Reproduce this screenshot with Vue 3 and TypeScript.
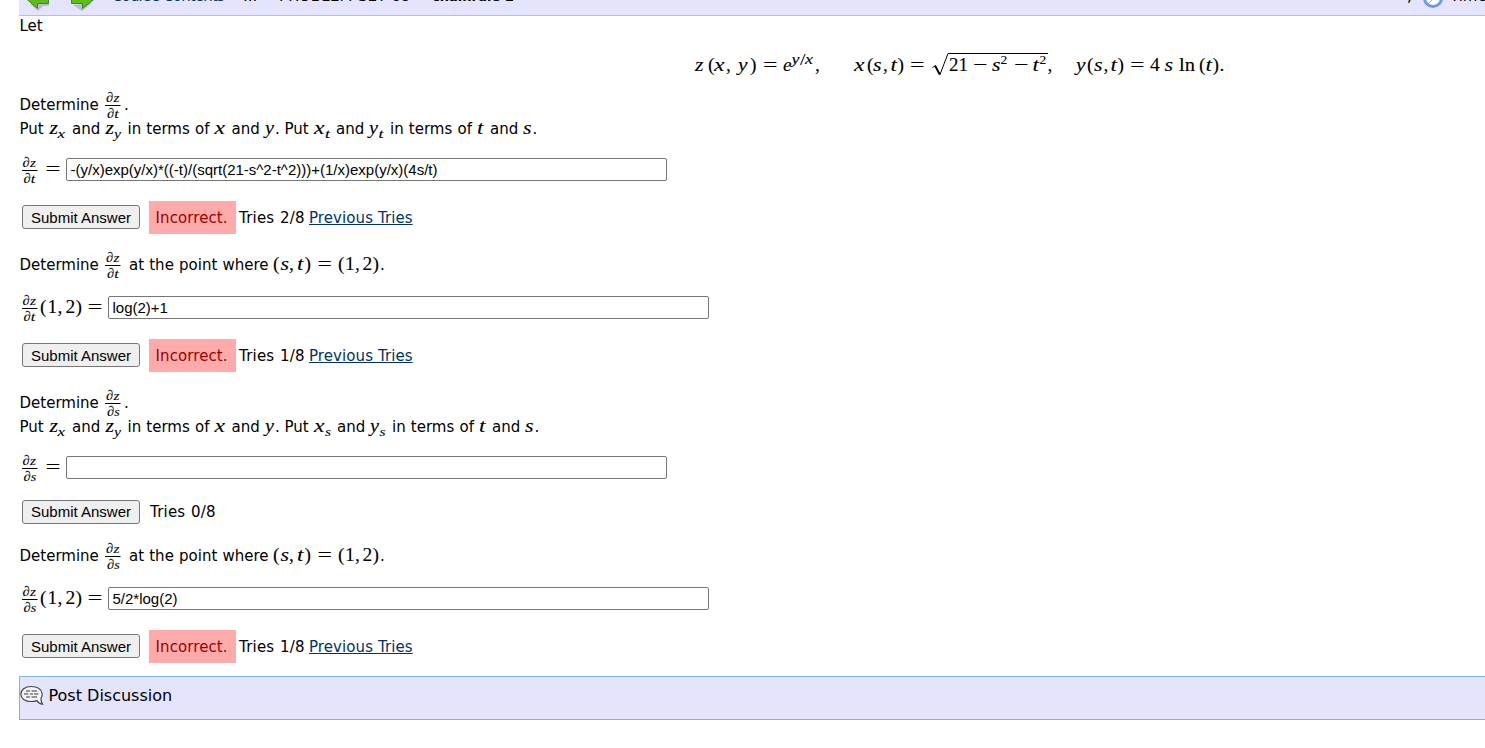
<script setup lang="ts">
type Glyph = { t: string; x: number; w?: number; size?: number; dy?: number; up?: boolean }
type Run = { w: number; text?: string; x?: number; glyphs?: Glyph[]; bar?: number; root?: boolean }
type Part = { lines: Run[][]; lhs: Run; width: number; value: string; tries: string; wrong: boolean }

const it = (t: string, x: number, w: number): Glyph => ({ t, x, w })
const up = (t: string, x: number, w?: number): Glyph => ({ t, x, w, up: true })
const sub = (t: string, x: number, w: number): Glyph => ({ t, x, w, size: 13.5, dy: 4 })
const frac = (v: string, x: number): Glyph[] => [
  { t: '∂', x: x + 1, w: 7, size: 14, dy: -8.2 },
  { t: 'z', x: x + 8.5, w: 6, size: 13.5, dy: -8.2 },
  { t: '∂', x: x + 2, w: 7, size: 14, dy: 7.5 },
  { t: v, x: x + 9.3, w: v === 't' ? 4.5 : 5.5, size: 13.5, dy: 7.5 },
]

const formula: Run = {
  x: 690, w: 540, root: true,
  glyphs: [
    it('z', 695, 8.5), up('(', 708), it('x', 714, 10.5), up(',', 726), it('y', 738, 9.5), up(')', 750), up('=', 763, 14.5),
    it('e', 783, 8.5), { t: 'y', x: 791.5, w: 8, size: 14, dy: -7 }, { t: '/', x: 800, w: 5.5, size: 17, dy: -6, up: true },
    { t: 'x', x: 805, w: 8, size: 14, dy: -7 }, up(',', 815),
    it('x', 854, 10.5), up('(', 867), it('s', 873, 8.5), up(',', 883), it('t', 890.5, 6.5), up(')', 897.5), up('=', 910, 14.5),
    up('21', 949, 19), up('−', 973, 14.5), it('s', 992, 8.5), { t: '2', x: 1000.5, size: 13.5, dy: -7, up: true },
    up('−', 1014, 14.5), it('t', 1032.5, 6.5), { t: '2', x: 1039.5, size: 13.5, dy: -7, up: true }, up(',', 1047.5),
    it('y', 1076, 9.5), up('(', 1087), it('s', 1094, 8.5), up(',', 1103.5), it('t', 1110.5, 6.5), up(')', 1117.5), up('=', 1130, 14.5),
    up('4', 1150), it('s', 1164.5, 8.5), up('ln', 1179, 16), up('(', 1199), it('t', 1205.5, 6.5), up(')', 1212.5), up('.', 1219.5),
  ],
}

const txt = (text: string, w: number): Run => ({ text, w })
const math = (x: number, w: number, glyphs: Glyph[], bar?: number): Run => ({ x, w, glyphs, bar })

const determine = (v: string): Run[] => [txt('Determine', 85.5), math(105, 19, frac(v, 105), 105), txt('.', 10)]

const terms = (v: string): Run[] => {
  const d = v === 's' ? 1 : 0
  return [
    txt('Put', 29.5), math(49, 23, [it('z', 49.5, 8.5), sub('x', 57.5, 7.5)]),
    txt('and', 33), math(105, 22.5, [it('z', 105.5, 8.5), sub('y', 114, 7)]),
    txt('in terms of', 85.5), math(213, 18.5, [it('x', 214.5, 10.5)]),
    txt('and', 32.5), math(264, 11, [it('y', 265, 9)]),
    txt('.', 9.5), txt('Put', 28.5),
    math(313, 23 + d, [it('x', 314, 10.5), sub(v, 325, v === 't' ? 5 : 6)]),
    txt('and', 33), math(369 + d, 21 + d, [it('y', 369 + d, 9), sub(v, 378.5 + d, v === 't' ? 5 : 6)]),
    txt('in terms of', 86), math(476 + 2 * d, 14, [it('t', 477 + 2 * d, 6.5)]),
    txt('and', 32), math(522 + 2 * d, 10.5, [it('s', 523 + 2 * d, 8.5)]),
    txt('.', 10),
  ]
}

const atPoint = (v: string): Run[] => [
  txt('Determine', 85.5), math(105, 24, frac(v, 105), 105), txt('at the point where', 142),
  math(271, 109, [
    up('(', 273), it('s', 280.5, 8.5), up(',', 289), it('t', 297, 6.5), up(')', 304.5), up('=', 317.5, 14.5),
    up('(', 338), up('1', 345), up(',', 355), up('2', 362.5), up(')', 372.5),
  ]),
  txt('.', 10),
]

const lhsShort = (v: string): Run => math(19, 47, [...frac(v, 21.5), up('=', 45.5, 15)], 22)
const lhsPoint = (v: string): Run =>
  math(19, 89, [...frac(v, 21.5), up('(', 40), up('1', 47.5), up(',', 57.5), up('2', 65.5), up(')', 75.5), up('=', 87.5, 15)], 22)

const parts: Part[] = [
  { lines: [determine('t'), terms('t')], lhs: lhsShort('t'), width: 601, value: '-(y/x)exp(y/x)*((-t)/(sqrt(21-s^2-t^2)))+(1/x)exp(y/x)(4s/t)', tries: 'Tries 2/8', wrong: true },
  { lines: [atPoint('t')], lhs: lhsPoint('t'), width: 601, value: 'log(2)+1', tries: 'Tries 1/8', wrong: true },
  { lines: [determine('s'), terms('s')], lhs: lhsShort('s'), width: 601, value: '', tries: 'Tries 0/8', wrong: false },
  { lines: [atPoint('s')], lhs: lhsPoint('s'), width: 601, value: '5/2*log(2)', tries: 'Tries 1/8', wrong: true },
]

const MathRun = (p: { run: Run }) => {
  const r = p.run
  const kids = (r.glyphs ?? []).map(g =>
    h('text', {
      x: g.x, y: 15.2 + (g.dy ?? 0), 'font-size': g.size ?? 19.5,
      'font-style': g.up ? 'normal' : 'italic',
      textLength: g.w, lengthAdjust: g.w ? 'spacingAndGlyphs' : undefined,
    }, g.t))
  if (r.bar !== undefined) kids.push(h('rect', { x: r.bar, y: 10, width: 15.5, height: 1 }))
  if (r.root) {
    kids.push(h('path', { d: 'M932.5 11.5L935.5 9.5L940 18.5L948 -2.5H1048', fill: 'none', stroke: '#000', 'stroke-width': 1 }))
    kids.push(h('path', { d: 'M935.2 10L939.7 18.5', stroke: '#000', 'stroke-width': 1.8 }))
  }
  return h('svg', { width: r.w, height: 20, viewBox: `${r.x} 0 ${r.w} 20` }, kids)
}
MathRun.props = ['run']
</script>

<script lang="ts">
import { h } from 'vue'
</script>

<template>
  <main class="page">
    <header class="bar">
      <svg class="arrow" width="26" height="12" viewBox="0 0 26 12">
        <path class="shade" d="M5 4L13 11L18 6H24V4Z" /><path d="M1.5 -3V-1L12.5 8.5V3.5H23.5V-3Z" />
      </svg>
      <svg class="arrow next" width="26" height="12" viewBox="0 0 26 12">
        <path class="shade" d="M3 5L12 11L22 3Z" /><path d="M24.5 -3V-1L12.5 8.5V3.5H1.5V-3Z" />
      </svg>
      <span class="crumb link">Course Contents</span>
      <span class="crumb dots">...</span>
      <span class="crumb set">PROBLEM SET 09</span>
      <span class="crumb item">chainrule 2</span>
      <span class="crumb tick">,</span>
      <svg class="clock" width="22" height="10" viewBox="0 0 22 10"><circle cx="11" cy="-2" r="8.5" /><path d="M7 3L12 -2" /></svg>
      <span class="crumb timer">Timer</span>
    </header>
    <p class="line intro">Let</p>
    <div class="formula"><MathRun :run="formula" /></div>

    <section v-for="(part, i) in parts" :key="i" class="part">
      <p v-for="(line, j) in part.lines" :key="j" class="line">
        <template v-for="(run, k) in line" :key="k">
          <span v-if="run.text" class="run" :style="{ width: run.w + 'px' }">{{ run.text }}</span>
          <MathRun v-else :run="run" />
        </template>
      </p>
      <div class="answer" :class="{ near: part.lines.length > 1 }">
        <MathRun :run="part.lhs" />
        <input type="text" :value="part.value" :style="{ width: part.width + 'px' }" />
      </div>
      <div class="status" :class="{ plain: !part.wrong }">
        <button type="button">Submit Answer</button>
        <span v-if="part.wrong" class="wrong">Incorrect.</span>
        <span class="tries">{{ part.tries }}</span>
        <a v-if="part.wrong">Previous Tries</a>
      </div>
    </section>

    <footer class="discussion">
      <svg width="25" height="22" viewBox="0 0 25 22">
        <path class="bubble" d="M11 1.5C5 1.5 .8 4.8 .8 9.1S5 16.5 11 16.5C13.3 16.5 15.3 16.2 16.8 15.6C18.3 17.8 20.3 19 22.4 19.1C21.2 17.7 20.9 15.5 21 13.3C22 11.8 22.4 10.5 22.2 8.8C21.6 4.4 17.5 1.5 11 1.5Z" />
        <path class="words" d="M6 6H10M11.5 6H17M4 9H8.5M10 9H13M14 9H18.5M6 12H10M11.5 12H17" />
      </svg>
      <span>Post Discussion</span>
    </footer>
  </main>
</template>

<style>
body { margin: 0; background: #fff; overflow: hidden; }
</style>

<style scoped>
.page { box-sizing: border-box; height: 748px; padding-left: 19px; overflow: hidden; font: 15px/20px Verdana, "DejaVu Sans", sans-serif; color: #000; }
.bar { display: flex; align-items: flex-start; height: 15px; overflow: hidden; background: #e4e4ff; border-bottom: 1px solid #c0c0c8; }
.arrow { flex: none; margin-left: 6px; fill: #5dbb1c; stroke: #3f8620; stroke-width: 1; }
.arrow .shade { fill: #b9bcc9; stroke: none; }
.arrow.next { margin-left: 19px; }
.crumb { flex: none; margin-top: -14px; white-space: pre; }
.link { width: 131px; margin-left: 16px; color: #036; letter-spacing: -.85px; }
.dots { width: 36px; }
.set { width: 153px; letter-spacing: .2px; }
.item { width: 120px; margin-top: -13px; font-weight: bold; font-size: 13px; }
.tick { margin-left: 855px; width: 15px; }
.clock { flex: none; fill: #fff; stroke: #6b9be8; stroke-width: 3; }
.clock path { stroke: #e88; stroke-width: 1; }
.timer { margin-left: 6px; }
.line { display: flex; height: 20px; margin: 0; padding-left: .5px; white-space: nowrap; }
.line + .line { margin-top: 4px; }
.run { flex: none; word-spacing: .4px; }
.formula { height: 20px; margin: 20px 0 19px 671px; }
.page :deep(svg) { display: block; flex: none; overflow: visible; font-family: "Liberation Serif", serif; }
.page :deep(svg text) { stroke: #000; stroke-width: .1px; }
.part + .part { margin-top: 21px; }
.answer { display: flex; height: 23px; margin-top: 21px; }
.answer.near { margin-top: 19px; }
.answer :deep(svg) { margin-top: 2px; }
.answer input { box-sizing: border-box; height: 23px; margin: 0; padding: 1px 4px 1px 3.5px; border: 1px solid #767676; border-radius: 2px; background: #fff; color: #000; font: 15px "Liberation Sans", Arial, sans-serif; }
.status { display: flex; align-items: flex-start; height: 33px; margin-top: 20px; line-height: 33px; white-space: nowrap; }
.status button { box-sizing: border-box; width: 118px; height: 24px; margin: 4px 9px 0 3px; padding: 0; border: 1px solid #767676; border-radius: 3px; background: #efefef; color: #000; font: 15px "Liberation Sans", Arial, sans-serif; }
.wrong { box-sizing: border-box; width: 87px; height: 33px; padding-left: 6.5px; background: #faa; color: #900; line-height: 34px; letter-spacing: .1px; }
.tries { width: 70px; padding-left: 3px; line-height: 34px; letter-spacing: .2px; word-spacing: .6px; }
.status a { color: #036; line-height: 34px; letter-spacing: .08px; text-decoration: underline; }
.status.plain { height: 26px; }
.plain button { margin-top: 1px; padding-bottom: 1px; }
.plain .tries { padding-left: 1px; line-height: 27px; }
.discussion { box-sizing: border-box; display: flex; height: 44px; margin-top: 13px; padding-top: 8px; border: 1px solid #7ab6ee; border-right: 0; background: #e4e4ff; font-size: 16px; }
.discussion span { margin: 1px 0 0 3.5px; }
.bubble { fill: #f4f4f4; stroke: #444; stroke-width: 1.2; }
.words { fill: none; stroke: #777; stroke-width: 1.5; }
</style>
